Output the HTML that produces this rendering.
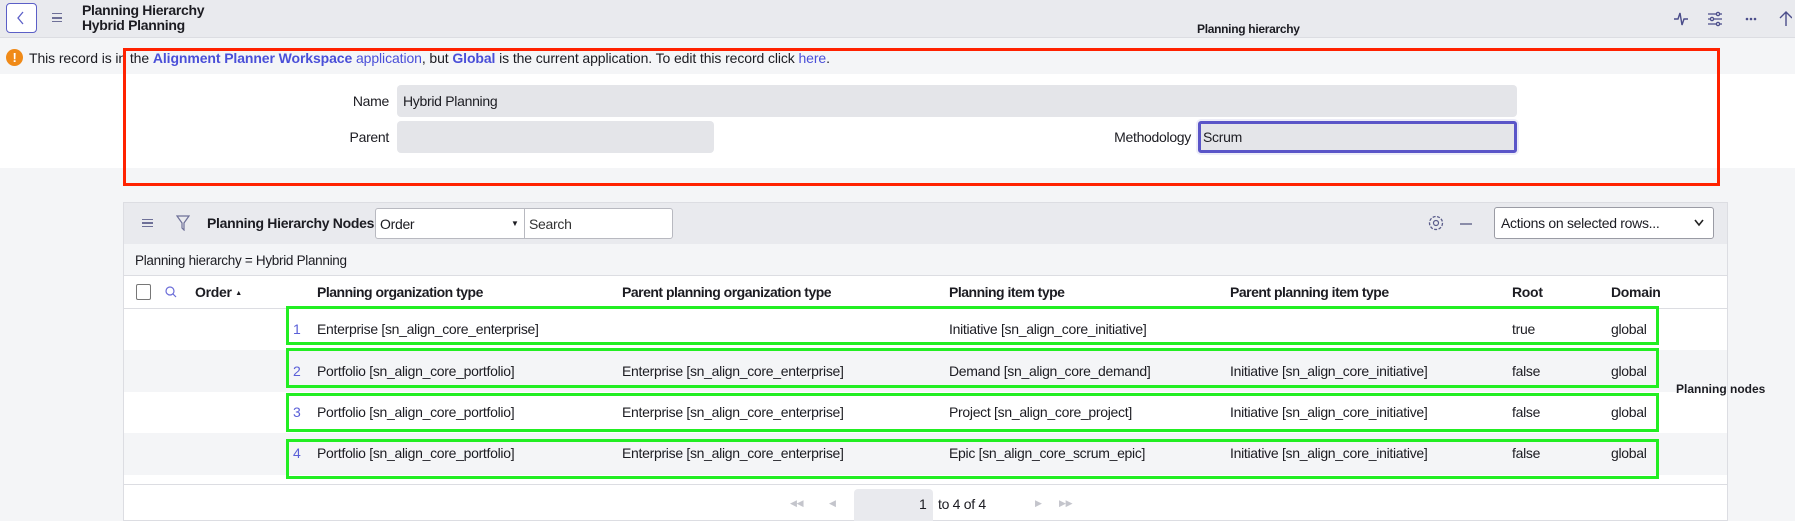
<!DOCTYPE html>
<html><head><meta charset="utf-8"><style>
*{box-sizing:border-box;margin:0;padding:0}
body{width:1795px;height:521px;overflow:hidden;background:#f4f5f7;font-family:"Liberation Sans",sans-serif;color:#1c1c22;position:relative;font-size:14px;letter-spacing:-0.3px}
.a{position:absolute;white-space:nowrap}
.hdr{position:absolute;left:0;top:0;width:1795px;height:38px;background:#e9eaee;border-bottom:1px solid #dcdde2}
.link{color:#4a4fd8}
.inp{position:absolute;background:#e4e5e9;border-radius:4px}
.g{position:absolute;border:3px solid #22ee22}
.row{position:absolute;left:124px;width:1603px;height:42px}
.num{color:#5a5fd8}
</style></head><body>
<div class="hdr"></div>
<div class="a" style="left:6px;top:3px;width:31px;height:30px;border:1.5px solid #5b5fc7;border-radius:4px;background:#fff"></div>
<svg class="a" style="left:15px;top:11px" width="12" height="14"><path d="M8 1 L3 7 L8 13" stroke="#5b5fc7" stroke-width="1.3" fill="none"/></svg>
<div class="a" style="left:52px;top:13px;width:10px;height:9px;border-top:1.5px solid #6e7098;border-bottom:1.5px solid #6e7098"></div>
<div class="a" style="left:52px;top:17px;width:10px;height:1.5px;background:#6e7098"></div>
<div class="a" style="left:82px;top:3px;font-size:14px;font-weight:bold;line-height:15px">Planning Hierarchy<br>Hybrid Planning</div>
<div class="a" style="left:1197px;top:22px;font-size:12px;font-weight:bold">Planning hierarchy</div>
<svg class="a" style="left:1672px;top:10px" width="120" height="18">
<path d="M2 9 H6 L8 3 L10 15 L12 9 H16" stroke="#4b4d8a" stroke-width="1.4" fill="none"/>
<g stroke="#4b4d8a" stroke-width="1.3" fill="none"><path d="M36 4 H50 M36 9 H50 M36 14 H50"/><circle cx="46" cy="4" r="1.6" fill="#e9eaee"/><circle cx="40" cy="9" r="1.6" fill="#e9eaee"/><circle cx="46" cy="14" r="1.6" fill="#e9eaee"/></g>
<g fill="#4b4d8a"><circle cx="75" cy="9" r="1.3"/><circle cx="79" cy="9" r="1.3"/><circle cx="83" cy="9" r="1.3"/></g>
<path d="M114 16 V2 M108 8 L114 2 L120 8" stroke="#4b4d8a" stroke-width="1.4" fill="none"/>
</svg>
<div class="a" style="left:0;top:74px;width:1795px;height:94px;background:#fff"></div>
<div class="a" style="left:6px;top:49px;width:17px;height:17px;border-radius:50%;background:#f08a18;color:#fff;font-weight:bold;font-size:13px;text-align:center;line-height:17px">!</div>
<div class="a" style="left:29px;top:50px;font-size:14px;letter-spacing:-0.1px">This record is in the <b class="link">Alignment Planner Workspace</b> <span class="link">application</span>, but <b class="link">Global</b> is the current application. To edit this record click <span class="link">here</span>.</div>
<div class="a" style="left:336px;top:93px;width:53px;text-align:right;font-size:14px">Name</div>
<div class="inp" style="left:397px;top:85px;width:1120px;height:32px"></div>
<div class="a" style="left:403px;top:93px;font-size:14px">Hybrid Planning</div>
<div class="a" style="left:330px;top:129px;width:59px;text-align:right;font-size:14px">Parent</div>
<div class="inp" style="left:397px;top:121px;width:317px;height:32px"></div>
<div class="a" style="left:1100px;top:129px;width:91px;text-align:right;font-size:14px">Methodology</div>
<div class="a" style="left:1196px;top:119px;width:323px;height:36px;border-radius:5px;background:#ececf8"></div>
<div class="inp" style="left:1198px;top:121px;width:319px;height:32px;border:3px solid #5a55c8;border-radius:3px"></div>
<div class="a" style="left:1203px;top:129px;font-size:14px">Scrum</div>
<div class="a" style="left:123px;top:48px;width:1597px;height:138px;border:3px solid #ff2200"></div>
<div class="a" style="left:123px;top:202px;width:1605px;height:319px;background:#fff;border:1px solid #dcdde2"></div>
<div class="a" style="left:124px;top:203px;width:1603px;height:41px;background:#e9eaee"></div>
<div class="a" style="left:124px;top:244px;width:1603px;height:32px;background:#f4f5f7;border-bottom:1px solid #dcdde2"></div>
<div class="a" style="left:142px;top:219px;width:11px;height:8px;border-top:1.5px solid #6e7098;border-bottom:1.5px solid #6e7098"></div>
<div class="a" style="left:142px;top:222px;width:11px;height:1.5px;background:#6e7098"></div>
<svg class="a" style="left:176px;top:215px" width="14" height="16"><path d="M1 1 H13 L8 8 V15 L6 13 V8 Z" stroke="#6e7098" stroke-width="1.2" fill="none"/></svg>
<div class="a" style="left:207px;top:215px;font-size:14px;font-weight:bold">Planning Hierarchy Nodes</div>
<div class="a" style="left:375px;top:208px;width:150px;height:31px;background:#fff;border:1px solid #b8b9c0;border-radius:3px 0 0 3px"></div>
<div class="a" style="left:380px;top:216px;font-size:14px">Order</div>
<div class="a" style="left:511px;top:219px;font-size:8px">▼</div>
<div class="a" style="left:524px;top:208px;width:149px;height:31px;background:#fff;border:1px solid #b8b9c0;border-radius:0 3px 3px 0"></div>
<div class="a" style="left:529px;top:216px;font-size:14px;color:#333">Search</div>
<svg class="a" style="left:1427px;top:214px" width="18" height="18"><circle cx="9" cy="9" r="6.5" stroke="#5a5c8a" stroke-width="1.3" fill="none" stroke-dasharray="3 1.5"/><circle cx="9" cy="9" r="2.5" stroke="#5a5c8a" stroke-width="1.2" fill="none"/></svg>
<div class="a" style="left:1460px;top:223px;width:12px;height:1.5px;background:#8a8ca8"></div>
<div class="a" style="left:1494px;top:207px;width:220px;height:32px;background:#fff;border:1px solid #9a9ba4;border-radius:3px"></div>
<div class="a" style="left:1501px;top:215px;font-size:14px">Actions on selected rows...</div>
<svg class="a" style="left:1694px;top:219px" width="10" height="8"><path d="M1 1 L5 6 L9 1" stroke="#222" stroke-width="1.6" fill="none"/></svg>
<div class="a" style="left:135px;top:253px;font-size:13.5px">Planning hierarchy = Hybrid Planning</div>
<div class="a" style="left:136px;top:284px;width:15px;height:16px;border:1px solid #777;border-radius:2px;background:#fff"></div>
<svg class="a" style="left:164px;top:285px" width="14" height="14"><circle cx="6" cy="6" r="4" stroke="#6a6cd8" stroke-width="1.2" fill="none"/><path d="M9 9 L12 12" stroke="#6a6cd8" stroke-width="1.2"/></svg>
<div class="a" style="left:195px;top:284px;font-size:14px;font-weight:bold">Order <span style="font-size:7px;vertical-align:2px">▲</span></div>
<div class="a" style="left:317px;top:284px;font-size:14px;font-weight:bold;letter-spacing:-0.5px">Planning organization type</div>
<div class="a" style="left:622px;top:284px;font-size:14px;font-weight:bold;letter-spacing:-0.5px">Parent planning organization type</div>
<div class="a" style="left:949px;top:284px;font-size:14px;font-weight:bold;letter-spacing:-0.5px">Planning item type</div>
<div class="a" style="left:1230px;top:284px;font-size:14px;font-weight:bold;letter-spacing:-0.5px">Parent planning item type</div>
<div class="a" style="left:1512px;top:284px;font-size:14px;font-weight:bold">Root</div>
<div class="a" style="left:1611px;top:284px;font-size:14px;font-weight:bold">Domain</div>
<div class="a" style="left:124px;top:308px;width:1603px;height:1px;background:#dcdde2"></div>
<div class="row" style="top:350px;background:#f4f5f7"></div>
<div class="row" style="top:433px;background:#f4f5f7"></div>
<div class="a" style="left:293px;top:321px"><span class="num">1</span></div>
<div class="a" style="left:317px;top:321px">Enterprise [sn_align_core_enterprise]</div>
<div class="a" style="left:949px;top:321px">Initiative [sn_align_core_initiative]</div>
<div class="a" style="left:1512px;top:321px">true</div><div class="a" style="left:1611px;top:321px">global</div>
<div class="a" style="left:293px;top:363px"><span class="num">2</span></div>
<div class="a" style="left:317px;top:363px">Portfolio [sn_align_core_portfolio]</div>
<div class="a" style="left:622px;top:363px">Enterprise [sn_align_core_enterprise]</div>
<div class="a" style="left:949px;top:363px">Demand [sn_align_core_demand]</div>
<div class="a" style="left:1230px;top:363px">Initiative [sn_align_core_initiative]</div>
<div class="a" style="left:1512px;top:363px">false</div><div class="a" style="left:1611px;top:363px">global</div>
<div class="a" style="left:293px;top:404px"><span class="num">3</span></div>
<div class="a" style="left:317px;top:404px">Portfolio [sn_align_core_portfolio]</div>
<div class="a" style="left:622px;top:404px">Enterprise [sn_align_core_enterprise]</div>
<div class="a" style="left:949px;top:404px">Project [sn_align_core_project]</div>
<div class="a" style="left:1230px;top:404px">Initiative [sn_align_core_initiative]</div>
<div class="a" style="left:1512px;top:404px">false</div><div class="a" style="left:1611px;top:404px">global</div>
<div class="a" style="left:293px;top:445px"><span class="num">4</span></div>
<div class="a" style="left:317px;top:445px">Portfolio [sn_align_core_portfolio]</div>
<div class="a" style="left:622px;top:445px">Enterprise [sn_align_core_enterprise]</div>
<div class="a" style="left:949px;top:445px">Epic [sn_align_core_scrum_epic]</div>
<div class="a" style="left:1230px;top:445px">Initiative [sn_align_core_initiative]</div>
<div class="a" style="left:1512px;top:445px">false</div><div class="a" style="left:1611px;top:445px">global</div>
<div class="g" style="left:286px;top:306px;width:1373px;height:39px"></div>
<div class="g" style="left:286px;top:348px;width:1373px;height:40px"></div>
<div class="g" style="left:286px;top:393px;width:1373px;height:39px"></div>
<div class="g" style="left:286px;top:439px;width:1373px;height:40px"></div>
<div class="a" style="left:1676px;top:382px;font-size:12px;font-weight:bold;letter-spacing:0">Planning nodes</div>
<div class="a" style="left:124px;top:484px;width:1603px;height:1px;background:#dcdde2"></div>
<div class="a" style="left:854px;top:489px;width:79px;height:32px;background:#e9eaee;border-radius:4px 4px 0 0"></div>
<div class="a" style="left:919px;top:496px;font-size:14px">1</div>
<div class="a" style="left:938px;top:496px;font-size:14px">to 4 of 4</div>
<div class="a" style="left:790px;top:498px;font-size:9px;color:#c4c5cc">◀◀</div>
<div class="a" style="left:829px;top:498px;font-size:9px;color:#c4c5cc">◀</div>
<div class="a" style="left:1035px;top:498px;font-size:9px;color:#c4c5cc">▶</div>
<div class="a" style="left:1059px;top:498px;font-size:9px;color:#c4c5cc">▶▶</div>
</body></html>
